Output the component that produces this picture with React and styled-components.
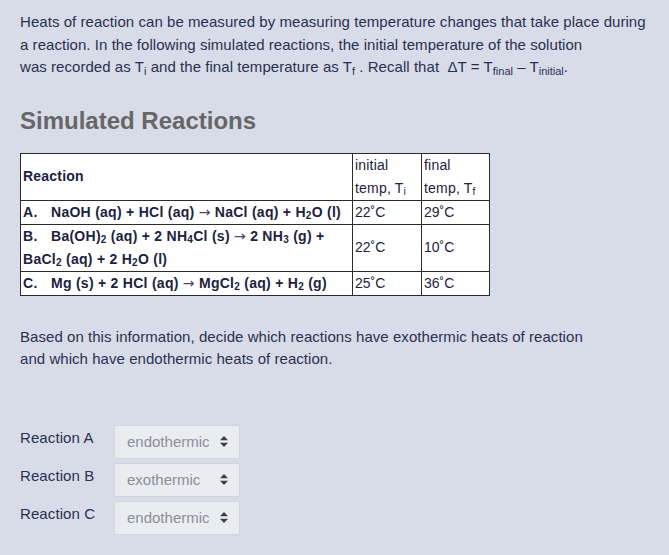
import styled, { createGlobalStyle } from "styled-components"

const Global = createGlobalStyle`
  html, body {
    margin: 0;
    background: #d8dce8;
  }
  body {
    font-family: "Liberation Sans", Arial, sans-serif;
    color: #2a3150;
  }
`

const Page = styled.div`
  padding: 11px 20px 20px 20px;
  width: 669px;
  box-sizing: border-box;
`

const Para = styled.p`
  margin: 0;
  font-size: 15px;
  line-height: 22.5px;
  letter-spacing: 0.05px;
  white-space: nowrap;

  sub {
    font-size: 11px;
    vertical-align: -3px;
    line-height: 0;
    letter-spacing: 0;
  }
`

const Heading = styled.h2`
  margin: 27px 0 0 0;
  font-size: 24px;
  line-height: 30px;
  font-weight: bold;
  color: #666;
`

const Table = styled.table`
  margin-top: 17px;
  border-collapse: collapse;
  width: 469px;
  background: #fff;
  table-layout: fixed;
  color: #1c2240;

  td, th {
    border: 1px solid #2b2b2b;
    padding: 0 2px;
    font-size: 14px;
    line-height: 23px;
    text-align: left;
    vertical-align: middle;
  }

  sub {
    font-size: 10px;
    vertical-align: -2px;
    line-height: 0;
  }
`

const HeadCell = styled.th`
  font-weight: bold;
  letter-spacing: 0.2px;
`

const TempHead = styled.th`
  font-weight: normal;
  letter-spacing: 0.2px;
`

const ReactionCell = styled.td`
  font-weight: bold;
  letter-spacing: 0.27px;
  white-space: nowrap;
`

const TempCell = styled.td`
  font-weight: normal;
`

const Letter = styled.span`
  display: inline-block;
  width: 28px;
`

const Arrow = styled.span`
  font-family: "DejaVu Sans", sans-serif;
  font-weight: normal;
  font-size: 14px;
  color: #444a5c;
`

const Question = styled(Para)`
  margin-top: 30px;
`

const Form = styled.div`
  margin-top: 54px;
  display: flex;
  flex-direction: column;
  gap: 4px;
`

const FormRow = styled.div`
  display: flex;
  align-items: flex-start;
`

const Label = styled.div`
  width: 94px;
  font-size: 15px;
  letter-spacing: 0.1px;
  line-height: 20px;
  padding-top: 3px;
`

const Select = styled.div`
  width: 126px;
  height: 34px;
  box-sizing: border-box;
  background: #e9ecf1;
  border: 1px solid #d2d6df;
  display: flex;
  align-items: center;
  justify-content: space-between;
  padding: 0 11px 0 12px;
  font-size: 15px;
  color: #8a8f9a;
`

const Chevrons = () => (
  <svg width="8" height="11" viewBox="0 0 8 11">
    <path d="M4 0 L8 4.3 H0 Z" fill="#3a3f4d" />
    <path d="M4 11 L8 6.7 H0 Z" fill="#3a3f4d" />
  </svg>
)

const answers = [
  { label: "Reaction A", value: "endothermic" },
  { label: "Reaction B", value: "exothermic" },
  { label: "Reaction C", value: "endothermic" },
]

export default function App() {
  return (
    <Page>
      <Global />
      <Para>
        Heats of reaction can be measured by measuring temperature changes that take place during
        <br />
        a reaction. In the following simulated reactions, the initial temperature of the solution
        <br />
        was recorded as T<sub>i</sub> and the final temperature as T<sub>f</sub> . Recall that&nbsp;
        ΔT = T<sub>final</sub> – T<sub>initial</sub>.
      </Para>

      <Heading>Simulated Reactions</Heading>

      <Table>
        <colgroup>
          <col style={{ width: 332 }} />
          <col style={{ width: 69 }} />
          <col style={{ width: 68 }} />
        </colgroup>
        <thead>
          <tr>
            <HeadCell>Reaction</HeadCell>
            <TempHead>initial temp, T<sub>i</sub></TempHead>
            <TempHead>final temp, T<sub>f</sub></TempHead>
          </tr>
        </thead>
        <tbody>
          <tr>
            <ReactionCell>
              <Letter>A.</Letter>NaOH (aq) + HCl (aq) <Arrow>→</Arrow> NaCl (aq) + H<sub>2</sub>O (l)
            </ReactionCell>
            <TempCell>22˚C</TempCell>
            <TempCell>29˚C</TempCell>
          </tr>
          <tr>
            <ReactionCell>
              <Letter>B.</Letter>Ba(OH)<sub>2</sub> (aq) + 2 NH<sub>4</sub>Cl (s) <Arrow>→</Arrow> 2 NH<sub>3</sub> (g) +
              <br />
              BaCl<sub>2</sub> (aq) + 2 H<sub>2</sub>O (l)
            </ReactionCell>
            <TempCell>22˚C</TempCell>
            <TempCell>10˚C</TempCell>
          </tr>
          <tr>
            <ReactionCell>
              <Letter>C.</Letter>Mg (s) + 2 HCl (aq) <Arrow>→</Arrow> MgCl<sub>2</sub> (aq) + H<sub>2</sub> (g)
            </ReactionCell>
            <TempCell>25˚C</TempCell>
            <TempCell>36˚C</TempCell>
          </tr>
        </tbody>
      </Table>

      <Question>
        Based on this information, decide which reactions have exothermic heats of reaction
        <br />
        and which have endothermic heats of reaction.
      </Question>

      <Form>
        {answers.map((a) => (
          <FormRow key={a.label}>
            <Label>{a.label}</Label>
            <Select>
              <span>{a.value}</span>
              <Chevrons />
            </Select>
          </FormRow>
        ))}
      </Form>
    </Page>
  )
}
